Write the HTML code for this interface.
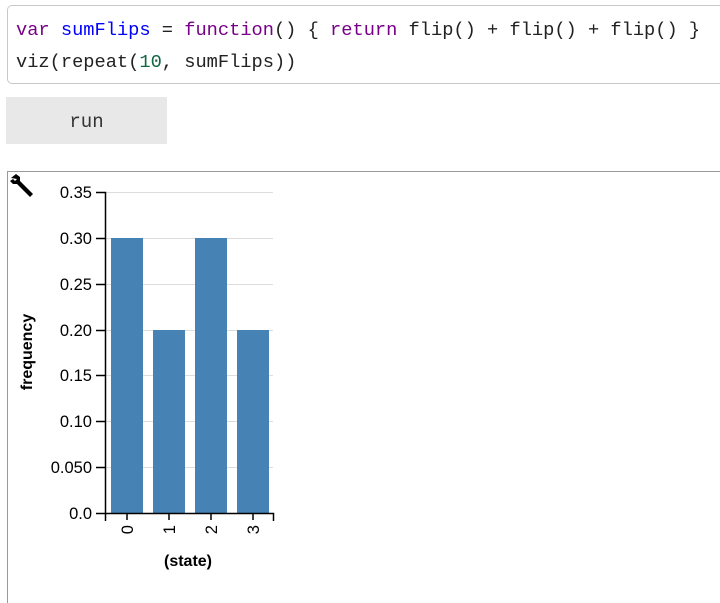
<!DOCTYPE html>
<html><head><style>
html,body{margin:0;width:720px;height:603px;overflow:hidden;background:#fff;font-family:"Liberation Sans",sans-serif}
.code{position:absolute;left:7px;top:5px;width:713px;height:79px;border:1px solid #c8c8c8;border-right:none;border-radius:5px 0 0 5px;box-sizing:border-box}
.code pre{margin:0;position:absolute;left:8px;top:8px;font-family:"Liberation Mono",monospace;font-size:18.7px;line-height:32px;color:#222}
.k{color:#770088}.d{color:#0000ff}.n{color:#116644}
.run{position:absolute;left:6px;top:97px;width:161px;height:47px;background:#e8e8e8;font-family:"Liberation Mono",monospace;font-size:19px;color:#333;text-align:center;line-height:50px}
.viz{position:absolute;left:7px;top:171px;width:713px;height:432px;border:1px solid #999;border-right:none;border-bottom:none;box-sizing:border-box}
</style></head><body>
<div class="code"><pre><span class="k">var</span> <span class="d">sumFlips</span> = <span class="k">function</span>() { <span class="k">return</span> flip() + flip() + flip() }
viz(repeat(<span class="n">10</span>, sumFlips))</pre></div>
<div class="run">run</div>
<div class="viz"></div>
<svg width="720" height="603" style="position:absolute;left:0;top:0" font-family="Liberation Sans, sans-serif">
<g transform="translate(10,174)"><path d="M1 4 L6 0 L10 3 L10 7 L23 20 L20 23 L7 10 L3 10 L0 7 L3 5 L5 7 L7 5 Z" fill="#000"/></g>
<g stroke="#ddd" stroke-width="1">
<line x1="105" x2="273" y1="192.5" y2="192.5"/><line x1="105" x2="273" y1="238.5" y2="238.5"/><line x1="105" x2="273" y1="284.5" y2="284.5"/><line x1="105" x2="273" y1="330.5" y2="330.5"/><line x1="105" x2="273" y1="375.5" y2="375.5"/><line x1="105" x2="273" y1="421.5" y2="421.5"/><line x1="105" x2="273" y1="467.5" y2="467.5"/>
</g>
<g fill="#4682b4">
<rect x="111" y="238" width="32" height="275"/><rect x="153" y="330" width="32" height="183"/><rect x="195" y="238" width="32" height="275"/><rect x="237" y="330" width="32" height="183"/>
</g>
<g stroke="#000" stroke-width="1.5" fill="none">
<path d="M96 192.5 H105.5 V513.5 H96"/>
<path d="M96 238.5H105M96 284.5H105M96 330.5H105M96 375.5H105M96 421.5H105M96 467.5H105"/>
<path d="M105.5 521 V513.5 H273.5 V521"/>
<path d="M127 513V520M169 513V520M211 513V520M253 513V520"/>
</g>
<g font-size="16.5" text-anchor="end" fill="#000">
<text x="92" y="198">0.35</text><text x="92" y="244">0.30</text><text x="92" y="290">0.25</text><text x="92" y="336">0.20</text><text x="92" y="381">0.15</text><text x="92" y="427">0.10</text><text x="92" y="473">0.050</text><text x="92" y="519">0.0</text>
</g>
<g font-size="16.5" text-anchor="end">
<text transform="translate(133,525) rotate(-90)">0</text><text transform="translate(175,525) rotate(-90)">1</text><text transform="translate(217,525) rotate(-90)">2</text><text transform="translate(259,525) rotate(-90)">3</text>
</g>
<text x="188" y="566" font-size="16" font-weight="bold" text-anchor="middle">(state)</text>
<text transform="translate(32,352) rotate(-90)" font-size="16" font-weight="bold" text-anchor="middle">frequency</text>
</svg>
</body></html>
